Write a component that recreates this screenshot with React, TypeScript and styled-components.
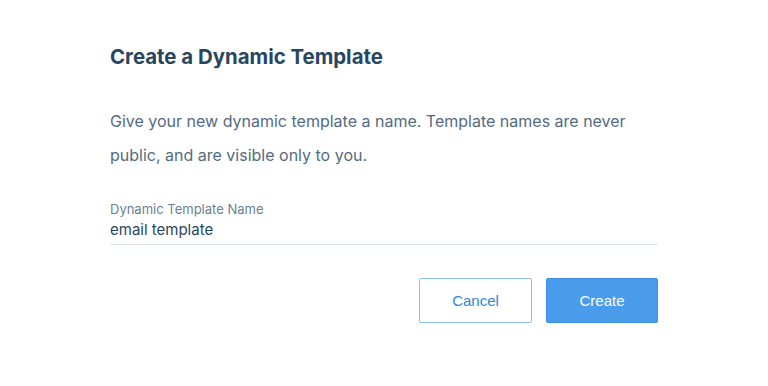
import React from 'react'
import styled, { createGlobalStyle } from 'styled-components'

const Global = createGlobalStyle`
  * {
    box-sizing: border-box;
  }
  body {
    margin: 0;
    padding: 0;
    background: #ffffff;
    font-family: Inter, "Liberation Sans", sans-serif;
  }
`

const Page = styled.div`
  width: 768px;
  height: 386px;
  padding: 44px 110px 0 110px;
`

const Title = styled.h2`
  margin: 0;
  font-size: 20.4px;
  line-height: 26px;
  font-weight: 700;
  color: #294661;
`

const Description = styled.p`
  margin: 34px 0 0 0;
  font-size: 16px;
  line-height: 34px;
  color: #546b81;
  max-width: 540px;
`

const Field = styled.label`
  display: flex;
  flex-direction: column;
  margin-top: 28px;
  border-bottom: 1px solid #dfe4e9;
  padding-bottom: 2px;
`

const FieldLabel = styled.span`
  font-size: 13px;
  line-height: 18px;
  color: #6a7f93;
`

const FieldValue = styled.span`
  font-size: 15px;
  line-height: 24px;
  color: #294661;
`

const Actions = styled.div`
  display: flex;
  justify-content: flex-end;
  gap: 14px;
  margin-top: 33px;
`

const Button = styled.button<{ $primary?: boolean }>`
  width: ${p => (p.$primary ? 112 : 113)}px;
  height: 45px;
  border-radius: 2px;
  font-family: "Liberation Sans", Arial, sans-serif;
  font-size: 15px;
  cursor: pointer;
  border: 1px solid ${p => (p.$primary ? '#3d8fe0' : '#8cbff1')};
  background: ${p => (p.$primary ? '#4a9be9' : '#ffffff')};
  color: ${p => (p.$primary ? '#ffffff' : '#2c86e0')};
`

export default function App () {
  return (
    <Page>
      <Global />
      <Title>Create a Dynamic Template</Title>
      <Description>
        Give your new dynamic template a name. Template names are never
        public, and are visible only to you.
      </Description>
      <Field>
        <FieldLabel>Dynamic Template Name</FieldLabel>
        <FieldValue>email template</FieldValue>
      </Field>
      <Actions>
        <Button>Cancel</Button>
        <Button $primary>Create</Button>
      </Actions>
    </Page>
  )
}
